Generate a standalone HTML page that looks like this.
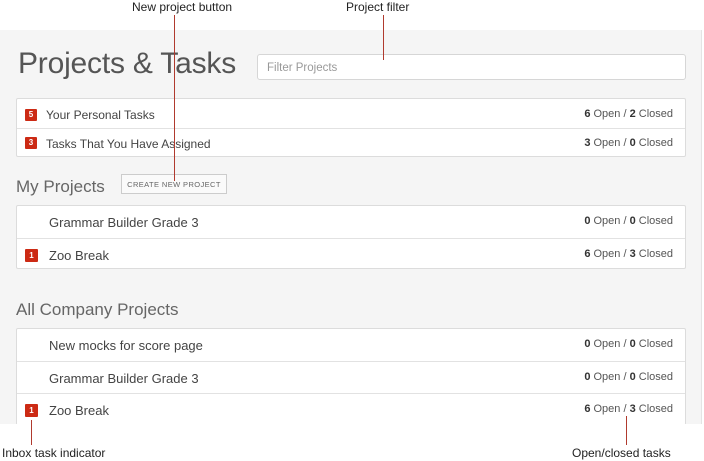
<!DOCTYPE html>
<html><head><style>
*{margin:0;padding:0;box-sizing:border-box}
body{width:704px;height:461px;background:#fff;font-family:"Liberation Sans",sans-serif;position:relative;overflow:hidden;color:#444}
.abs{position:absolute}
.panel{left:0;top:30px;width:702px;height:394px;background:#f5f5f5;border-right:1px solid #e4e4e4}
.lbl{font-size:12px;color:#222;white-space:nowrap}
.line{width:1px;background:#b03a2e}
.box{left:16px;width:670px;background:#fff;border:1px solid #dcdcdc;border-radius:2px}
.row{position:relative;border-top:1px solid #e2e2e2}
.row:first-child{border-top:none}
.badge{position:absolute;left:8px;width:12px;height:12px;background:#cc2a14;color:#fff;font-size:8px;font-weight:bold;text-align:center;line-height:12px;border-radius:1px}
.name{position:absolute;color:#444}
.cnt{position:absolute;right:12px;font-size:11px;color:#555}
.cnt b{color:#333}
h2{position:absolute;font-weight:normal;font-size:17px;color:#666}
</style></head><body>
<div class="abs panel"></div>
<div class="abs lbl" style="left:132px;top:0px">New project button</div>
<div class="abs lbl" style="left:346px;top:0px">Project filter</div>
<div class="abs" style="left:18px;top:47px;font-size:30px;color:#555;letter-spacing:-0.2px">Projects &amp; Tasks</div>
<div class="abs" style="left:257px;top:54px;width:429px;height:26px;background:#fff;border:1px solid #d6d6d6;border-radius:3px;font-size:11.5px;color:#999;padding:7px 0 0 9px">Filter Projects</div>

<div class="abs box" style="top:98px;height:59px">
 <div class="row" style="height:29px"><div class="badge" style="top:10px">5</div><div class="name" style="left:29px;top:9px;font-size:12px">Your Personal Tasks</div><div class="cnt" style="top:9px"><b>6</b> Open / <b>2</b> Closed</div></div>
 <div class="row" style="height:29px"><div class="badge" style="top:8px">3</div><div class="name" style="left:29px;top:8px;font-size:12px">Tasks That You Have Assigned</div><div class="cnt" style="top:8px"><b>3</b> Open / <b>0</b> Closed</div></div>
</div>

<h2 style="left:16px;top:177px">My Projects</h2>
<div class="abs" style="left:121px;top:174px;width:106px;height:20px;border:1px solid #ccc;background:#fafafa;font-size:7.5px;color:#666;text-align:center;line-height:19px;letter-spacing:0.4px">CREATE NEW PROJECT</div>

<div class="abs box" style="top:205px;height:64px">
 <div class="row" style="height:32px"><div class="name" style="left:32px;top:9px;font-size:13px">Grammar Builder Grade 3</div><div class="cnt" style="top:9px"><b>0</b> Open / <b>0</b> Closed</div></div>
 <div class="row" style="height:31px"><div class="badge" style="top:10px;width:13px;height:13px;line-height:13px">1</div><div class="name" style="left:32px;top:9px;font-size:13px">Zoo Break</div><div class="cnt" style="top:9px"><b>6</b> Open / <b>3</b> Closed</div></div>
</div>

<h2 style="left:16px;top:300px">All Company Projects</h2>
<div class="abs box" style="top:328px;height:97px;border-bottom:none">
 <div class="row" style="height:32px"><div class="name" style="left:32px;top:9px;font-size:13px">New mocks for score page</div><div class="cnt" style="top:9px"><b>0</b> Open / <b>0</b> Closed</div></div>
 <div class="row" style="height:32px"><div class="name" style="left:32px;top:9px;font-size:13px">Grammar Builder Grade 3</div><div class="cnt" style="top:9px"><b>0</b> Open / <b>0</b> Closed</div></div>
 <div class="row" style="height:32px"><div class="badge" style="top:10px;width:13px;height:13px;line-height:13px">1</div><div class="name" style="left:32px;top:9px;font-size:13px">Zoo Break</div><div class="cnt" style="top:9px"><b>6</b> Open / <b>3</b> Closed</div></div>
</div>
<div class="abs" style="left:0;top:424px;width:704px;height:37px;background:#fff"></div>

<div class="abs line" style="left:174px;top:15px;height:166px"></div>
<div class="abs line" style="left:383px;top:15px;height:45px"></div>
<div class="abs line" style="left:31px;top:420px;height:25px"></div>
<div class="abs line" style="left:626px;top:416px;height:29px"></div>
<div class="abs lbl" style="left:2px;top:446px">Inbox task indicator</div>
<div class="abs lbl" style="left:572px;top:446px">Open/closed tasks</div>
</body></html>
